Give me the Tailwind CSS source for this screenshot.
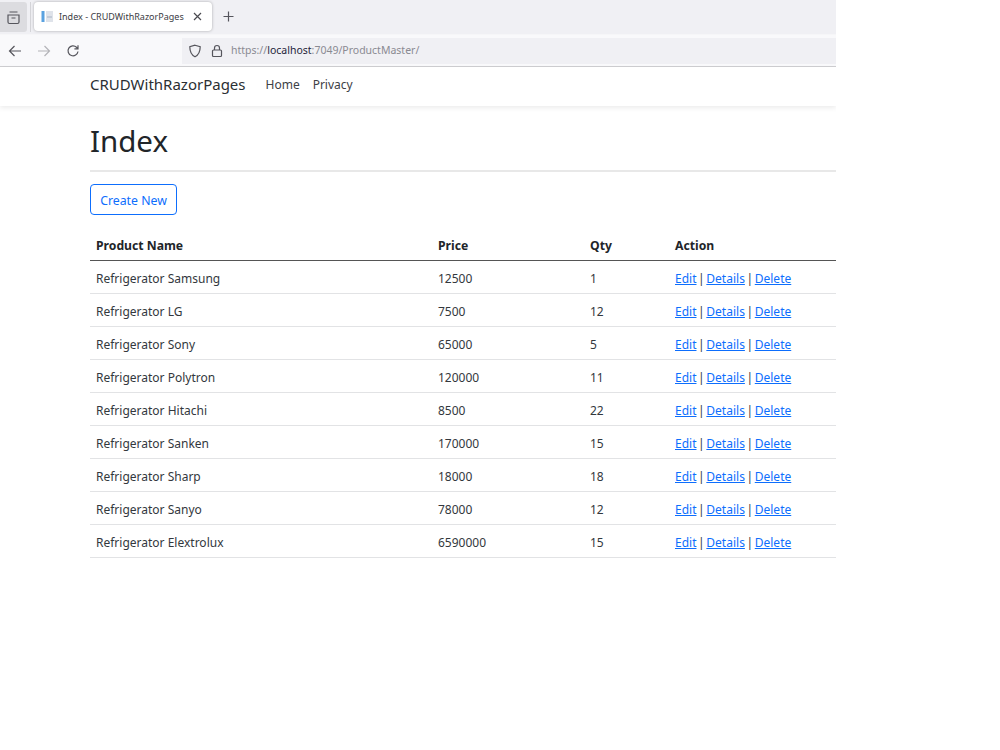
<!DOCTYPE html>
<html lang="en">
<head>
  <meta charset="UTF-8">
  <title>Index - CRUDWithRazorPages</title>
  <script src="https://cdn.jsdelivr.net/npm/@tailwindcss/browser@4"></script>
</head>
<body class="bg-white font-['Noto_Sans',sans-serif] text-[#212529]">
  <div class="w-[836px] overflow-hidden">
    <!-- browser tabs -->
    <div class="h-[34px] bg-[#f0f0f4] flex items-start">
      <div class="w-[27px] h-[30px] mt-[2px] bg-[#dcdce0] rounded-r-[3px] flex items-center justify-center">
        <svg width="15" height="15" viewBox="0 0 15 15" fill="none" stroke="#55555c" stroke-width="1.2"><path d="M3.5 2h8M2 5h11v7a1.5 1.5 0 0 1-1.5 1.5h-8A1.5 1.5 0 0 1 2 12zM5.5 8h4"/></svg>
      </div>
      <div class="w-px h-[30px] mt-[2px] ml-[3px] bg-[#d4d4d8]"></div>
      <div class="ml-[3px] mt-[2px] w-[178px] h-[29px] bg-white rounded-[4px] shadow-[0_0_3px_rgba(0,0,0,0.3)] flex items-center pl-[7px] pr-[10px]">
        <svg width="13" height="14" viewBox="0 0 13 14" class="shrink-0"><rect x="0.5" y="1" width="3" height="11" fill="#5aa2e0"/><rect x="5" y="1" width="7" height="11" fill="#dfe3ea"/><rect x="6" y="6" width="5" height="2" fill="#c4ccd8"/></svg>
        <span class="ml-[5px] text-[9px] text-[#3c3c44] whitespace-nowrap">Index - CRUDWithRazorPages</span>
        <svg width="9" height="9" viewBox="0 0 9 9" class="ml-auto shrink-0" stroke="#4a4a50" stroke-width="1.2"><path d="M1 1l7 7M8 1l-7 7"/></svg>
      </div>
      <svg width="11" height="11" viewBox="0 0 11 11" class="ml-[11px] mt-[11px]" stroke="#55555c" stroke-width="1.2"><path d="M5.5 0.5v10M0.5 5.5h10"/></svg>
    </div>
    <!-- toolbar -->
    <div class="h-[33px] bg-[#f9f9fb] border-t border-[#f6f6f8] border-b border-b-[#cfcfd2] flex items-center">
      <svg width="14" height="14" viewBox="0 0 14 14" fill="none" stroke="#55555c" stroke-width="1.2" class="ml-[8px]"><path d="M13 7H1.5M6.5 2L1.5 7l5 5"/></svg>
      <svg width="14" height="14" viewBox="0 0 14 14" fill="none" stroke="#b4b4b8" stroke-width="1.2" class="ml-[15px]"><path d="M1 7h11.5M7.5 2l5 5-5 5"/></svg>
      <svg width="14" height="14" viewBox="0 0 14 14" fill="none" stroke="#55555c" stroke-width="1.2" class="ml-[15px]"><path d="M12 7.5A5 5 0 1 1 10.5 3.2L12 4.6M12 1.2v3.6H8.4"/></svg>
      <div class="ml-[102px] flex-1 h-[26px] bg-[#f0f0f4] flex items-center pl-[6px]">
        <svg width="14" height="14" viewBox="0 0 14 14" fill="none" stroke="#55555c" stroke-width="1.2"><path d="M7 1.2l5.2 1.6c0 5-1.6 8.2-5.2 10-3.6-1.8-5.2-5-5.2-10z"/></svg>
        <svg width="12" height="14" viewBox="0 0 12 14" fill="none" stroke="#55555c" stroke-width="1.2" class="ml-[9px]"><rect x="1.5" y="6" width="9" height="6.5" rx="1"/><path d="M3.5 6V4a2.5 2.5 0 0 1 5 0v2"/></svg>
        <span class="ml-[8px] text-[10.5px] text-[#8a8a92] whitespace-nowrap">https://<span class="text-[#1f1f3a]">localhost</span>:7049/ProductMaster/</span>
      </div>
    </div>
    <!-- site nav -->
    <nav class="h-[39px] pb-[3px] bg-white flex items-center pl-[90px] shadow-[0_2px_5px_rgba(0,0,0,0.08)] relative">
      <a class="text-[15px] text-[#2b2f33] mb-[2px]">CRUDWithRazorPages</a>
      <a class="ml-[20px] text-[12px] text-[#3d4146]">Home</a>
      <a class="ml-[13px] text-[12px] text-[#3d4146]">Privacy</a>
    </nav>
    <main class="pl-[90px]">
      <h1 class="text-[29.5px] leading-[40px] mt-[15px] h-[49px] text-[#212529]">Index</h1>
      <hr class="border-t-2 border-[#e8e8e8]">
      <a class="mt-[12px] inline-flex items-center justify-center w-[87px] h-[31px] pt-[3px] border border-[#0d6efd] rounded-[4px] text-[12.3px] text-[#0d6efd]">Create New</a>
      <table class="mt-[12px] w-[746px] table-fixed text-[12px] text-left text-[#33383d]">
        <colgroup>
          <col class="w-[342px]"><col class="w-[152px]"><col class="w-[85px]"><col>
        </colgroup>
        <thead class="text-[#212529]">
          <tr class="h-[33px] border-b border-[#555]">
            <th class="px-[6px] pt-[5px] text-[12.2px] font-bold">Product Name</th>
            <th class="px-[6px] pt-[5px] text-[12.2px] font-bold">Price</th>
            <th class="px-[6px] pt-[5px] text-[12.2px] font-bold">Qty</th>
            <th class="px-[6px] pt-[5px] text-[12.2px] font-bold">Action</th>
          </tr>
        </thead>
        <tbody>
          <tr class="h-[33px] border-b border-[#e2e3e5]"><td class="px-[6px] pt-[5px]">Refrigerator Samsung</td><td class="px-[6px] pt-[5px]">12500</td><td class="px-[6px] pt-[5px]">1</td><td class="px-[6px] pt-[5px] [word-spacing:-1.5px]"><a class="text-[#0d6efd] underline">Edit</a> | <a class="text-[#0d6efd] underline">Details</a> | <a class="text-[#0d6efd] underline">Delete</a></td></tr>
          <tr class="h-[33px] border-b border-[#e2e3e5]"><td class="px-[6px] pt-[5px]">Refrigerator LG</td><td class="px-[6px] pt-[5px]">7500</td><td class="px-[6px] pt-[5px]">12</td><td class="px-[6px] pt-[5px] [word-spacing:-1.5px]"><a class="text-[#0d6efd] underline">Edit</a> | <a class="text-[#0d6efd] underline">Details</a> | <a class="text-[#0d6efd] underline">Delete</a></td></tr>
          <tr class="h-[33px] border-b border-[#e2e3e5]"><td class="px-[6px] pt-[5px]">Refrigerator Sony</td><td class="px-[6px] pt-[5px]">65000</td><td class="px-[6px] pt-[5px]">5</td><td class="px-[6px] pt-[5px] [word-spacing:-1.5px]"><a class="text-[#0d6efd] underline">Edit</a> | <a class="text-[#0d6efd] underline">Details</a> | <a class="text-[#0d6efd] underline">Delete</a></td></tr>
          <tr class="h-[33px] border-b border-[#e2e3e5]"><td class="px-[6px] pt-[5px]">Refrigerator Polytron</td><td class="px-[6px] pt-[5px]">120000</td><td class="px-[6px] pt-[5px]">11</td><td class="px-[6px] pt-[5px] [word-spacing:-1.5px]"><a class="text-[#0d6efd] underline">Edit</a> | <a class="text-[#0d6efd] underline">Details</a> | <a class="text-[#0d6efd] underline">Delete</a></td></tr>
          <tr class="h-[33px] border-b border-[#e2e3e5]"><td class="px-[6px] pt-[5px]">Refrigerator Hitachi</td><td class="px-[6px] pt-[5px]">8500</td><td class="px-[6px] pt-[5px]">22</td><td class="px-[6px] pt-[5px] [word-spacing:-1.5px]"><a class="text-[#0d6efd] underline">Edit</a> | <a class="text-[#0d6efd] underline">Details</a> | <a class="text-[#0d6efd] underline">Delete</a></td></tr>
          <tr class="h-[33px] border-b border-[#e2e3e5]"><td class="px-[6px] pt-[5px]">Refrigerator Sanken</td><td class="px-[6px] pt-[5px]">170000</td><td class="px-[6px] pt-[5px]">15</td><td class="px-[6px] pt-[5px] [word-spacing:-1.5px]"><a class="text-[#0d6efd] underline">Edit</a> | <a class="text-[#0d6efd] underline">Details</a> | <a class="text-[#0d6efd] underline">Delete</a></td></tr>
          <tr class="h-[33px] border-b border-[#e2e3e5]"><td class="px-[6px] pt-[5px]">Refrigerator Sharp</td><td class="px-[6px] pt-[5px]">18000</td><td class="px-[6px] pt-[5px]">18</td><td class="px-[6px] pt-[5px] [word-spacing:-1.5px]"><a class="text-[#0d6efd] underline">Edit</a> | <a class="text-[#0d6efd] underline">Details</a> | <a class="text-[#0d6efd] underline">Delete</a></td></tr>
          <tr class="h-[33px] border-b border-[#e2e3e5]"><td class="px-[6px] pt-[5px]">Refrigerator Sanyo</td><td class="px-[6px] pt-[5px]">78000</td><td class="px-[6px] pt-[5px]">12</td><td class="px-[6px] pt-[5px] [word-spacing:-1.5px]"><a class="text-[#0d6efd] underline">Edit</a> | <a class="text-[#0d6efd] underline">Details</a> | <a class="text-[#0d6efd] underline">Delete</a></td></tr>
          <tr class="h-[33px] border-b border-[#e2e3e5]"><td class="px-[6px] pt-[5px]">Refrigerator Elextrolux</td><td class="px-[6px] pt-[5px]">6590000</td><td class="px-[6px] pt-[5px]">15</td><td class="px-[6px] pt-[5px] [word-spacing:-1.5px]"><a class="text-[#0d6efd] underline">Edit</a> | <a class="text-[#0d6efd] underline">Details</a> | <a class="text-[#0d6efd] underline">Delete</a></td></tr>
        </tbody>
      </table>
    </main>
  </div>
</body>
</html>
